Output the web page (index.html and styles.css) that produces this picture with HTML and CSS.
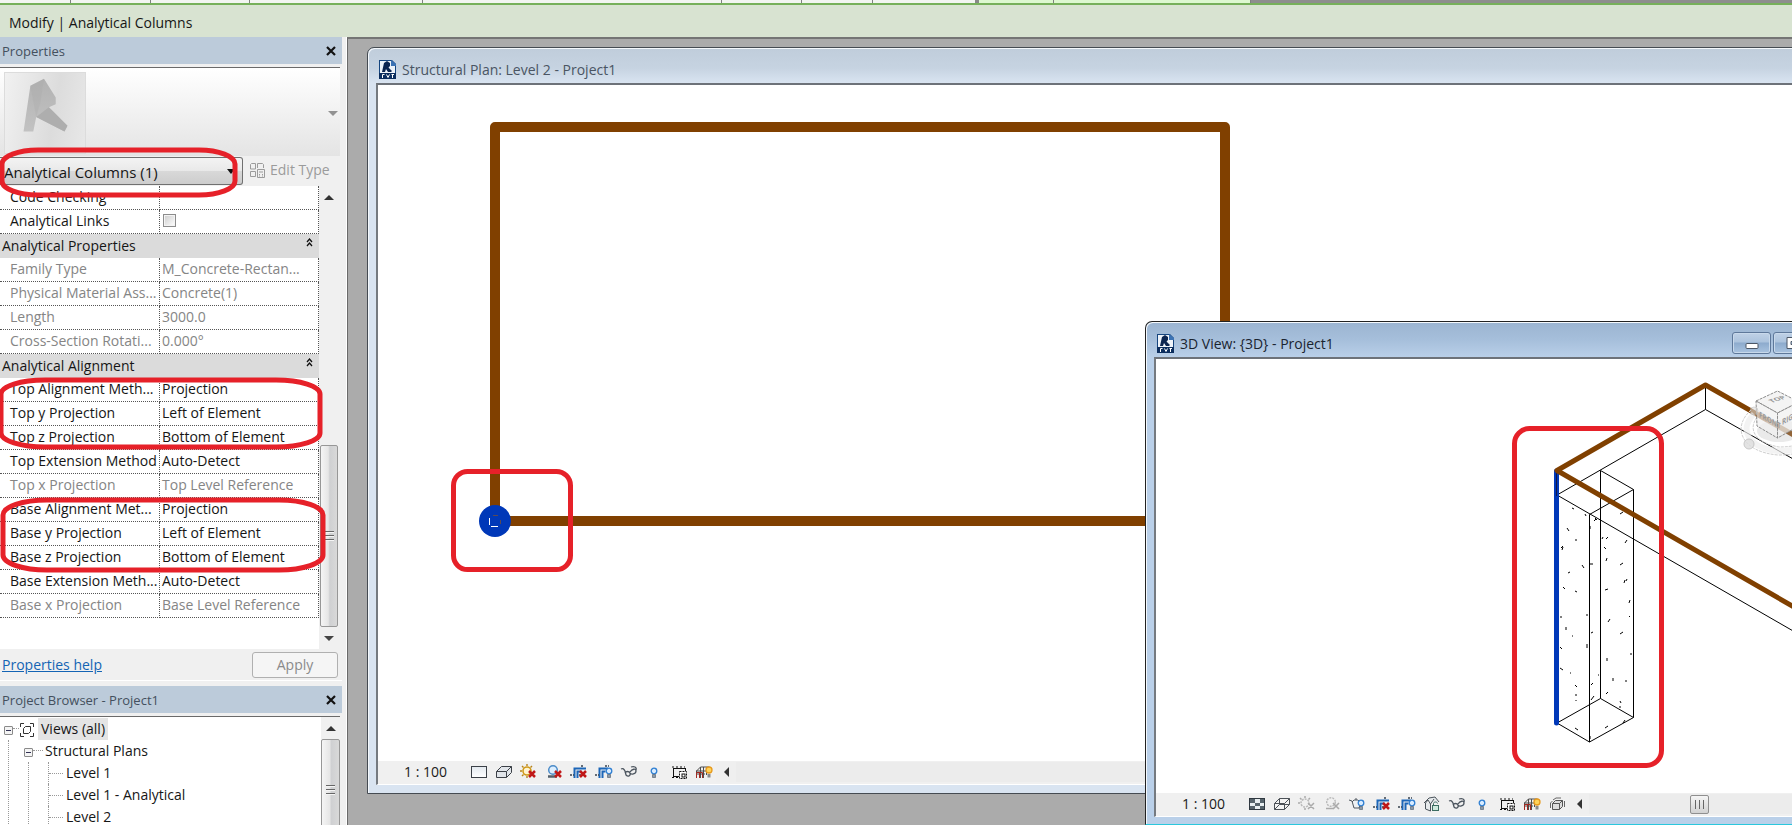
FILE: index.html
```html
<!DOCTYPE html>
<html lang="en">
<head>
<meta charset="utf-8">
<title>Project1 - Analytical Columns</title>
<link rel="stylesheet" href="styles.css">
</head>
<body>
<svg class="sprite" aria-hidden="true">
  <defs>
    <linearGradient id="gLogo" x1="0" y1="0" x2="0" y2="1"><stop offset="0" stop-color="#b2b2b2"/><stop offset="1" stop-color="#c2c2c2"/></linearGradient>
    <linearGradient id="gSheet" x1="0" y1="0" x2="0" y2="1"><stop offset="0" stop-color="#e2e8ee"/><stop offset="1" stop-color="#fff"/></linearGradient>
    <symbol id="rvt" viewBox="0 0 17 19">
      <path d="M0 0h13l4 4v15H0z" fill="#15457f"/>
      <path d="M1 1h11v4h4v8H1z" fill="#eef3f9"/>
      <path d="M12 0l5 4v2h-5z" fill="#3c73b4"/>
      <path d="M5 3l3-2 3 2v3L9.500 7.500 13 11l-1 1H9L7 9l-1 3H3z" fill="#0b2550"/>
      <path d="M0 13h17v6H0z" fill="#0b2d5e"/>
      <path d="M3.500 18v-3.500h2M7.500 14.500l1.500 3 1.500-3M13.500 18v-3.500M12.500 14.500h2.500" stroke="#fff" fill="none"/>
    </symbol>
    <symbol id="sheet" viewBox="0 0 18 16"><rect x="1.500" y="2.500" width="15" height="11" fill="url(#gSheet)" stroke="#3b4047"/></symbol>
    <symbol id="checker" viewBox="0 0 18 16"><rect x="1.500" y="2.500" width="15" height="11" fill="#e8eef0" stroke="#2f3840"/><path d="M2 3h5v4H2zM12 3h4v4h-4zM7 7h5v3H7zM2 10h5v3H2zM12 10h4v3h-4z" fill="#56636b"/></symbol>
    <symbol id="box" viewBox="0 0 18 16"><path d="M1.500 7.500l5-5h10v6l-5 5h-10zM1.500 7.500h10v6M11.500 7.500l5-5" fill="#e1e5ea" stroke="#3b4047"/></symbol>
    <symbol id="wire" viewBox="0 0 18 16"><path d="M1.500 7.500l5-5h10v6l-5 5h-10zM1.500 7.500h10v6M11.500 7.500l5-5M6.500 2.500v6l-5 5M6.500 8.500h10" fill="#f4f4f4" stroke="#4c5157"/></symbol>
    <symbol id="cross" viewBox="0 0 8 8"><path d="M1 1l6 6M7 1L1 7" stroke="#c01818" stroke-width="2.500"/></symbol>
    <symbol id="bulb" viewBox="0 0 8 12"><circle cx="4" cy="4" r="2.800" fill="#d9ecff" stroke="#2f7fd2" stroke-width="1.300"/><path d="M2.500 7.500h3v3h-3z" fill="#8b98a6" stroke="#4a5968" stroke-width=".6"/></symbol>
    <symbol id="sun" viewBox="0 0 18 16"><circle cx="7" cy="7" r="4" fill="#fff4cf" stroke="#d19a1a" stroke-width="1.600"/><path d="M7 0v2M7 12v2M0 7h2M2 2l1.500 1.500M12 2l-1.500 1.500M2 12l1.500-1.500" stroke="#b8841a" stroke-width="1.400"/><use href="#cross" x="8" y="6" width="8" height="8"/></symbol>
    <symbol id="shadow" viewBox="0 0 18 16"><circle cx="8" cy="6" r="4.300" fill="#dceeff" stroke="#4b8bc8" stroke-width="1.500"/><path d="M3 12.500h9" stroke="#53606c" stroke-width="2.500"/><use href="#cross" x="9" y="6" width="8" height="8"/></symbol>
    <symbol id="sunOff" viewBox="0 0 18 16"><circle cx="7" cy="7" r="4" fill="none" stroke="#b9b9b9" stroke-width="1.500" stroke-dasharray="2 1"/><path d="M7 0v2M7 12v2M0 7h2M2 2l1.500 1.500M12 2l-1.500 1.500M10 7l6 6M16 7l-6 6" stroke="#aaa" stroke-width="1.500"/></symbol>
    <symbol id="shadowOff" viewBox="0 0 18 16"><circle cx="8" cy="6" r="4.300" fill="none" stroke="#b9b9b9" stroke-width="1.400" stroke-dasharray="2 1"/><path d="M3 12.500h7M10 7l6 6M16 7l-6 6" stroke="#aaa" stroke-width="1.600"/></symbol>
    <symbol id="teapot" viewBox="0 0 18 16"><path d="M1 4l3 1 2 7h5l2-5-3-3H6L4 6M8 2v2" fill="#eef1f3" stroke="#4e565e"/><use href="#bulb" x="9" y="3" width="8" height="12"/></symbol>
    <symbol id="crop" viewBox="0 0 18 16"><path d="M4.500 14V4.500H16M7.500 14V7.500h4" fill="none" stroke="#1c66b8" stroke-width="2"/><path d="M0 11h4M9 11h4M12 1v3" stroke="#37424d" stroke-dasharray="2 1" stroke-width="1.500"/><use href="#cross" x="9" y="6" width="8" height="8"/></symbol>
    <symbol id="cropShow" viewBox="0 0 18 16"><path d="M4.500 14V4.500H13M7.500 14V7.500h3" fill="none" stroke="#1c66b8" stroke-width="2"/><path d="M0 11h4M10 2h4" stroke="#37424d" stroke-dasharray="2 1" stroke-width="1.500"/><use href="#bulb" x="10" y="3" width="8" height="12"/></symbol>
    <symbol id="home" viewBox="0 0 18 16"><path d="M1 7l5-5 6-1 4 5M2.500 7v6l5 2V8L5 4zM7.500 8L11 3" fill="#e6eaec" stroke="#4b545b"/><path d="M10.500 9V7.500c0-2 4-2 4 0" fill="none" stroke="#3c6d62"/><rect x="9.500" y="9.500" width="6" height="5" fill="#cfe9dd" stroke="#3c6d62"/></symbol>
    <symbol id="glasses" viewBox="0 0 18 16"><path d="M1 5c2-1 3 0 4 2l1 4c2 2 5 1 4-2-1-2-4-2-5 0M10 9c1 2 6 1 6-2s-4-2-6 1M16 6c1-3-2-4-5-3" fill="none" stroke="#4c555f" stroke-width="1.300"/></symbol>
    <symbol id="bulbOnly" viewBox="0 0 18 16"><use href="#bulb" x="5" y="3" width="8" height="12"/></symbol>
    <symbol id="constraint" viewBox="0 0 18 16"><path d="M3.500 4v8M3 4.500h12M3 12.500h6M15.500 4v3" fill="none" stroke="#111"/><path d="M2 3h13M2 13.500h7" stroke="#111" stroke-dasharray="2 2"/><rect x="9.500" y="7.500" width="7" height="7" fill="#fff" stroke="#111" stroke-dasharray="2 1"/><rect x="12" y="10" width="3" height="3" fill="none" stroke="#111"/></symbol>
    <symbol id="analytic" viewBox="0 0 18 16"><path d="M1.500 14V7l4-4h9v6M1 7h10M5.500 3v11M8.500 3v11M11.500 3v8M2 10h8" fill="none" stroke="#4d4d4d"/><path d="M1.500 14V8.500h6V14M4.500 9v5" fill="none" stroke="#a32a22"/><circle cx="14" cy="6" r="3" fill="#ffd35a" stroke="#e79a1c" stroke-width="1.300"/><path d="M12.500 10h3v3.500h-3z" fill="#8a8a8a"/></symbol>
    <symbol id="displace" viewBox="0 0 18 16"><path d="M4.500 7.500h7v6h-7zM4.500 7.500l3-3h7v6l-3 3M11.500 7.500l3-3" fill="#dcdcdc" stroke="#555"/><path d="M5 4l3-2h5M2.500 12V7l2-2M16.500 5v6" fill="none" stroke="#666"/></symbol>
  </defs>
</svg>

<div class="app">
  <div class="ribbon" aria-hidden="true">
    <i class="w70"></i><i class="w80"></i><i class="w100"></i><i class="w172"></i><i class="w300"></i><i class="w80"></i><i class="w70"></i><i class="w107"></i><i class="w75 ctx"></i><i class="w197 ctx"></i>
  </div>
  <header class="options">Modify | Analytical Columns</header>

  <div class="main">
    <aside class="side">
      <section class="panel properties">
        <div class="panel-head"><h2>Properties</h2><button class="close" aria-label="Close Properties"><svg width="10" height="10" viewBox="0 0 10 10"><path d="M1 1l8 8M9 1L1 9" stroke="#111" stroke-width="2.200"/></svg></button></div>
        <div class="type-preview">
          <svg class="preview" width="82" height="82" viewBox="0 0 82 82" role="img" aria-label="Family preview"><path d="M26 13L40 6l12 19v7l-7 3 19 19-3 6-29-15-3 15H19z" fill="url(#gLogo)"/><path d="M32 45l13-10 19 19-3 6z" fill="#aeaeae"/><path d="M26 13L40 6l-4 25-4 14z" fill="#aaa" opacity=".3"/></svg>
          <button class="drop" aria-label="Change type"></button>
        </div>
        <div class="filter">
          <div class="select"><select aria-label="Element filter"><option>Analytical Columns (1)</option></select></div>
          <button class="edit" disabled><svg width="17" height="17" viewBox="0 0 17 17" fill="none" stroke="#9b9b9b"><path d="M1.500 7V2.500l1-1h4V7zM8.500 6V1.500h5l1 1V6M1.500 9.500h5v5h-5z"/><path d="M8.500 7.500h7v8h-7zM10 10h4M10 12.500h1M13 12.500h1M10 14h1M13 14h1"/></svg>Edit Type</button>
        </div>
        <div class="grid">
          <table>
            <colgroup><col class="name"><col></colgroup>
            <tbody>
              <tr><td>Code Checking</td><td></td></tr>
              <tr><td><label for="links">Analytical Links</label></td><td><input type="checkbox" id="links"></td></tr>
              <tr class="group"><th colspan="2"><button>Analytical Properties<svg width="7" height="9" viewBox="0 0 7 9"><path d="M1 4l2.500-3L6 4M1 8l2.500-3L6 8" fill="none" stroke="#111" stroke-width="1.300"/></svg></button></th></tr>
              <tr class="off"><td>Family Type</td><td>M_Concrete-Rectan...</td></tr>
              <tr class="off"><td>Physical Material Ass...</td><td>Concrete(1)</td></tr>
              <tr class="off"><td>Length</td><td>3000.0</td></tr>
              <tr class="off"><td>Cross-Section Rotati...</td><td>0.000°</td></tr>
              <tr class="group"><th colspan="2"><button>Analytical Alignment<svg width="7" height="9" viewBox="0 0 7 9"><path d="M1 4l2.500-3L6 4M1 8l2.500-3L6 8" fill="none" stroke="#111" stroke-width="1.300"/></svg></button></th></tr>
              <tr><td>Top Alignment Meth...</td><td>Projection</td></tr>
              <tr><td>Top y Projection</td><td>Left of Element</td></tr>
              <tr><td>Top z Projection</td><td>Bottom of Element</td></tr>
              <tr><td>Top Extension Method</td><td>Auto-Detect</td></tr>
              <tr class="off"><td>Top x Projection</td><td>Top Level Reference</td></tr>
              <tr><td>Base Alignment Met...</td><td>Projection</td></tr>
              <tr><td>Base y Projection</td><td>Left of Element</td></tr>
              <tr><td>Base z Projection</td><td>Bottom of Element</td></tr>
              <tr><td>Base Extension Meth...</td><td>Auto-Detect</td></tr>
              <tr class="off"><td>Base x Projection</td><td>Base Level Reference</td></tr>
            </tbody>
          </table>
          <div class="vscroll"><button class="up" aria-label="Scroll up"></button><div class="track low"><div class="thumb"></div></div><button class="down" aria-label="Scroll down"></button></div>
        </div>
        <div class="foot"><a href="#help">Properties help</a><button class="apply" disabled>Apply</button></div>
        <svg class="marks" aria-hidden="true">
          <rect x="2" y="113" width="233" height="45" rx="36" ry="14"/>
          <rect x="1" y="343" width="319" height="67" rx="44" ry="14"/>
          <rect x="3" y="463" width="320" height="70" rx="44" ry="15"/>
        </svg>
      </section>
      <section class="panel browser">
        <div class="panel-head"><h2>Project Browser - Project1</h2><button class="close" aria-label="Close Project Browser"><svg width="10" height="10" viewBox="0 0 10 10"><path d="M1 1l8 8M9 1L1 9" stroke="#111" stroke-width="2.200"/></svg></button></div>
        <div class="tree-wrap">
          <ul class="tree">
            <li class="root"><button class="tog" aria-label="Collapse Views"></button><i class="dash short"></i><svg width="14" height="14" viewBox="0 0 14 14" fill="none" stroke="#333"><path d="M.5 4V.5H4M10 .5h3.500V4M.5 10v3.500H4M10 13.500h3.500V10"/><path d="M3.500 5.500l2-2h5v5l-2 2h-5z"/></svg><span class="sel">Views (all)</span>
              <ul>
                <li class="branch"><button class="tog" aria-label="Collapse Structural Plans"></button><i class="dash"></i><span>Structural Plans</span>
                  <ul>
                    <li class="leaf"><span>Level 1</span></li>
                    <li class="leaf"><span>Level 1 - Analytical</span></li>
                    <li class="leaf"><span>Level 2</span></li>
                  </ul>
                </li>
              </ul>
            </li>
          </ul>
          <div class="vscroll"><button class="up" aria-label="Scroll up"></button><div class="track"><div class="thumb"></div></div></div>
        </div>
      </section>
    </aside>

    <main class="desk">
      <section class="win plan">
        <div class="title"><svg width="17" height="19"><use href="#rvt"/></svg><h1>Structural Plan: Level 2 - Project1</h1></div>
        <div class="client">
          <svg class="view" role="img" aria-label="Structural plan of Level 2">
            <g transform="translate(-378 -85)">
              <path d="M1225 521V127H495v394h730z" fill="none" stroke="#804000" stroke-width="10" stroke-linejoin="round"/>
              <circle cx="495" cy="521" r="16" fill="#0038b8"/>
              <path d="M489.500 518v7M491 526.500h7" stroke="#fff" stroke-width="1"/>
              <path d="M493 515.500h5M500.500 520v4" stroke="#5b4a52"/>
              <rect x="453.500" y="471.500" width="117" height="98" rx="14" fill="none" stroke="#e62129" stroke-width="5"/>
            </g>
          </svg>
          <div class="viewbar">
            <button class="scale">1 : 100</button>
            <button aria-label="Detail level"><svg><use href="#sheet"/></svg></button>
            <button aria-label="Visual style"><svg><use href="#box"/></svg></button>
            <button aria-label="Sun path off"><svg><use href="#sun"/></svg></button>
            <button aria-label="Shadows off"><svg><use href="#shadow"/></svg></button>
            <button aria-label="Do not crop view"><svg><use href="#crop"/></svg></button>
            <button aria-label="Show crop region"><svg><use href="#cropShow"/></svg></button>
            <button aria-label="Temporary hide or isolate"><svg><use href="#glasses"/></svg></button>
            <button aria-label="Reveal hidden elements"><svg><use href="#bulbOnly"/></svg></button>
            <button aria-label="Reveal constraints"><svg><use href="#constraint"/></svg></button>
            <button aria-label="Analytical model"><svg><use href="#analytic"/></svg></button>
            <div class="hscroll"><button class="left" aria-label="Scroll left"></button></div>
          </div>
        </div>
      </section>

      <section class="win three">
        <div class="title"><svg width="17" height="19"><use href="#rvt"/></svg><h1>3D View: {3D} - Project1</h1>
          <div class="ctl">
            <button aria-label="Minimize"><svg width="14" height="14" viewBox="0 0 14 14"><rect x="1" y="7.500" width="12" height="5" rx="1" fill="#fff" stroke="#4c5766"/></svg></button>
            <button aria-label="Maximize"><svg width="14" height="14" viewBox="0 0 14 14"><path d="M1 1.500h12v11H1zM5 5.500v3h4v-3z" fill="#fff" stroke="#4c5766" fill-rule="evenodd"/></svg></button>
            <button aria-label="Close"></button>
          </div>
        </div>
        <div class="client">
          <svg class="view" role="img" aria-label="3D view of the analytical column">
            <g transform="translate(-1156 -359)" fill="none">
              <g stroke="#000" stroke-width="1">
                <path d="M1705.500 386v23.500M1557 495l148.500-85.500L1880 508M1557 495l323 186"/>
                <path d="M1600.500 470.500l33 19M1633.500 489.500l-44 25M1600.500 470.500v228M1633.500 489.500v228M1589.500 514.500v227.500"/>
                <path d="M1557 723l43.500-24.500 33 19-44 24.500z"/>
                <path d="M1572 508l2 1M1585 514l1 2M1595 518l2 2M1594 521l2-2M1620 514l3-2M1567 528l2 3M1590 526v3M1575 540h2M1602 539l1-2M1606 539l2-2M1625 543l2-3M1561 548l2-2M1604 547l2 2M1562 550l1-3M1568 573l2-1M1582 565l2 3M1590 564h3M1606 561l1-3M1620 565l3-2M1563 587l2 2M1575 591l2 1M1605 590l3-1M1624 583l1-3M1626 581l1-2M1629 603l1-3M1560 617h2M1587 614v2M1608 622l2-3M1629 616l1 1M1566 627v3M1572 636h1M1591 633l2-1M1620 634l3-2M1560 647l2 2M1587 644v4M1607 658v3M1631 653v2M1560 668l3 2M1570 673h1M1598 675h1M1613 681v-3M1626 680v2M1575 685l2 2M1591 685l2-2M1576 694v2M1576 700v1M1591 700l3-4M1606 694l2-2M1620 701l1 2M1620 706v2M1575 728l3 2M1605 728l3-2M1623 723l2-3M1590 736v3"/>
              </g>
              <path d="M1556.500 471v252" stroke="#0038b8" stroke-width="5" stroke-linecap="round"/>
              <path d="M1556.500 472v24" stroke="#101848"/>
              <path d="M1880 484l-174.500-99L1557 470.500l323 186" stroke="#804000" stroke-width="5" stroke-linejoin="round"/>
              <path d="M1751 410c-20 18-9 42 27 45 18 0 30-4 40-10M1757 417c-10 14 0 26 22 30 14 0 25-3 34-9" stroke="#cfcfcf" stroke-dasharray="3 1"/>
              <path d="M1754 414c-16 16-5 34 24 37 16 0 28-4 37-10" stroke="#eee" stroke-width="6" opacity=".7"/>
              <ellipse cx="1779" cy="431" rx="22" ry="11" fill="#bbb" opacity=".3"/>
              <g stroke="#8c8c8c" stroke-dasharray="3 1" fill="#f0f0f0" fill-opacity=".7"><path d="M1756 401l21.500-10 21.500 11-21.500 11z"/><path d="M1756 401l21.500 12v25l-20.500-12z"/><path d="M1777.500 413l21.500-11v24l-21.500 12z"/></g>
              <circle cx="1749" cy="444" r="5" fill="#ddd" stroke="#bbb" opacity=".8"/>
              <circle cx="1754" cy="411" r="4" fill="#ddd" stroke="#bbb" opacity=".6"/>
              <g class="cube"><text transform="matrix(.9 -.3 .7 .5 1772 403)">TOP</text><text transform="matrix(.8 .45 0 1 1759 417)">FRONT</text><text transform="matrix(.8 -.45 0 1 1782 425)">RIGHT</text></g>
              <rect x="1514.500" y="428.500" width="147" height="337" rx="15" stroke="#e62129" stroke-width="5"/>
            </g>
          </svg>
          <div class="viewbar">
            <button class="scale">1 : 100</button>
            <button aria-label="Detail level"><svg><use href="#checker"/></svg></button>
            <button aria-label="Visual style"><svg><use href="#wire"/></svg></button>
            <button aria-label="Sun path" disabled><svg><use href="#sunOff"/></svg></button>
            <button aria-label="Shadows" disabled><svg><use href="#shadowOff"/></svg></button>
            <button aria-label="Rendering dialog"><svg><use href="#teapot"/></svg></button>
            <button aria-label="Do not crop view"><svg><use href="#crop"/></svg></button>
            <button aria-label="Show crop region"><svg><use href="#cropShow"/></svg></button>
            <button aria-label="Lock 3D view"><svg><use href="#home"/></svg></button>
            <button aria-label="Temporary hide or isolate"><svg><use href="#glasses"/></svg></button>
            <button aria-label="Reveal hidden elements"><svg><use href="#bulbOnly"/></svg></button>
            <button aria-label="Reveal constraints"><svg><use href="#constraint"/></svg></button>
            <button aria-label="Analytical model"><svg><use href="#analytic"/></svg></button>
            <button aria-label="Displacement sets"><svg><use href="#displace"/></svg></button>
            <div class="hscroll"><button class="left" aria-label="Scroll left"></button><div class="hthumb"></div></div>
          </div>
        </div>
      </section>
    </main>
  </div>
</div>
</body>
</html>
```

FILE: styles.css
```css
* { box-sizing: border-box; }
body {
  margin: 0;
  font: 14px/20px "Open Sans", "Noto Sans", sans-serif;
  color: #161616;
  background: #f0f0f0;
}
button, select, input { font: inherit; color: inherit; margin: 0; padding: 0; }
button { border: 0; background: none; }
h1, h2 { margin: 0; font: inherit; white-space: nowrap; }
ul { list-style: none; margin: 0; padding: 0; }
.sprite { position: absolute; width: 0; height: 0; }

.app { display: flex; flex-direction: column; height: 100vh; overflow: hidden; }

/* ribbon edge */
.ribbon { display: flex; flex: none; height: 5px; background: #8e8e8e; border-bottom: 2px solid #76b05a; }
.ribbon i { background: #f2f5f1; border-right: 1px solid #808080; }
.ribbon .w70 { width: 71px; }
.ribbon .w75 { width: 75px; }
.ribbon .w80 { width: 80px; }
.ribbon .w100 { width: 99px; }
.ribbon .w107 { width: 106px; border-right: 4px solid #888; }
.ribbon .w172 { width: 173px; }
.ribbon .w197 { width: 197px; }
.ribbon .w300 { width: 299px; }
.ribbon .ctx { background: #ddf8d0; }

.options { flex: none; height: 32px; padding: 8px 9px 0; background: #d8e3d1; white-space: nowrap; }
.main { display: flex; flex: 1; min-height: 0; }

/* left side */
.side { display: flex; flex-direction: column; flex: none; width: 347px; padding-right: 4px; background: #f0f0f0; border-right: 1px solid #fff; }
.panel { display: flex; flex-direction: column; position: relative; }
.panel-head { display: flex; flex: none; align-items: center; justify-content: space-between; height: 27px; padding: 0 6px 0 2px; margin-bottom: 3px; background: #bccbda; color: #44505e; font-size: 13px; }
.close { display: flex; padding: 0; }

.type-preview { display: flex; justify-content: space-between; height: 89px; padding: 4px 2px 2px 4px; margin-right: 2px; border-top: 1px solid #6a6a6a; background: linear-gradient(#fff, #e4e4e4); }
.preview { border: 1px solid #dcdcdc; background: linear-gradient(100deg, #f1f1f1, #dcdcdc 60%, #e8e8e8); }
.drop { width: 10px; }
.drop::before { content: ""; display: block; border: 5px solid transparent; border-top-color: #929292; border-bottom: 0; }

.filter { display: flex; height: 30px; padding-top: 1px; gap: 6px; }
.select { position: relative; flex: none; width: 243px; height: 28px; }
.select select { width: 100%; height: 28px; padding: 1px 4px 0; appearance: none; border: 1px solid #707070; border-left: 0; border-radius: 0 3px 3px 0; background: linear-gradient(#f3f3f3, #e9e9e9 48%, #d8d8d8 52%, #cdcdcd); font-size: 15px; }
.select::after { content: ""; position: absolute; right: 8px; top: 12px; border: 4px solid transparent; border-top: 5px solid #111; border-bottom: 0; pointer-events: none; }
.edit { display: flex; align-items: center; gap: 4px; height: 26px; color: #9b9b9b; white-space: nowrap; }

.grid { display: flex; height: 463px; background: #fff; }
.grid table { flex: 1; height: max-content; table-layout: fixed; border-collapse: separate; border-spacing: 0; min-width: 0; }
.grid .name { width: 160px; }
.grid td, .grid th { height: 24px; padding: 0; font-weight: normal; text-align: left; white-space: nowrap; overflow: hidden; }
.grid td { border-right: 1px dotted #555; border-bottom: 1px dotted #555; padding: 0 0 2px 2px; }
.grid td:first-child { padding-left: 10px; }
.grid .off { color: #858585; }
.group button { display: flex; justify-content: space-between; width: 100%; height: 24px; padding: 2px 6px 0 2px; background: #dbdbdb; }
.group svg { margin-top: 2px; }
.grid input { display: block; width: 13px; height: 13px; margin-left: 1px; appearance: none; border: 1px solid #8c8c8c; background: linear-gradient(135deg, #ccc, #fff); box-shadow: inset 0 0 0 1px #f4f4f4; }

.vscroll { display: flex; flex-direction: column; flex: none; width: 23px; padding: 0 4px 0 1px; background: #f0f0f0; }
.vscroll button { flex: none; height: 22px; display: grid; place-items: center; }
.vscroll .up::before { content: ""; border: 5px solid transparent; border-bottom-color: #333; border-top: 0; }
.vscroll .down::before { content: ""; border: 5px solid transparent; border-top-color: #444; border-bottom: 0; }
.track { display: flex; flex-direction: column; flex: 1; }
.track.low { padding-top: 237px; }
.thumb { display: grid; place-items: center; flex: 1; border: 1px solid #979797; border-radius: 2px; background: linear-gradient(90deg, #f5f5f5, #e6e6e6 45%, #cfd0d2 55%, #d9d9d9); }
.thumb::before { content: ""; width: 9px; height: 10px; background: repeating-linear-gradient(#666 0 1px, #f5f5f5 1px 2px, transparent 2px 4px); }

.foot { display: flex; justify-content: space-between; align-items: center; height: 32px; padding: 0 4px 0 2px; border-bottom: 1px solid #fff; }
.foot a { color: #1464b4; }
.apply { width: 86px; height: 26px; border: 1px solid #b0b0b0; border-radius: 3px; background: #f5f5f5; color: #8a8a8a; }

.marks { position: absolute; left: 0; top: 0; width: 100%; height: 100%; pointer-events: none; fill: none; stroke: #e62129; stroke-width: 5px; }

.browser { flex: 1; min-height: 0; margin-top: 5px; }
.tree-wrap { display: flex; flex: 1; min-height: 0; margin-right: 2px; overflow: hidden; border-top: 1px solid #6a6a6a; background: #fff; }
.tree { flex: 1; padding: 1px 0 0 4px; line-height: 22px; white-space: nowrap; }
.tog { display: inline-block; width: 9px; height: 9px; border: 1px solid #8a8a8a; border-radius: 1px; background: linear-gradient(#335, #335) center / 5px 1px no-repeat, #f4f4f4; }
.dash { display: inline-block; width: 10px; height: 1px; margin: 0 2px 5px 0; border-top: 1px dotted #999; }
.dash.short { width: 6px; margin-right: 1px; }
.root > svg { vertical-align: middle; }
.sel { display: inline-block; line-height: 22px; margin-left: 4px; padding: 0 3px; background: #e4e4e4; vertical-align: top; }
.root > ul { margin-left: 4px; padding-left: 15px; border-left: 1px dotted #999; }
.branch > ul { margin-left: 4px; padding-left: 19px; border-left: 1px dotted #999; }
.leaf { display: flex; align-items: center; gap: 3px; border-left: 1px dotted #999; }
.leaf::before { content: ""; width: 14px; border-top: 1px dotted #999; }
.browser .vscroll { width: 19px; padding: 0; }
.browser .thumb { flex: none; height: 102px; }

/* drawing area */
.desk { position: relative; flex: 1; overflow: hidden; background: #ababab; border-left: 1px solid #6a6a6a; border-top: 2px solid #757575; }
.win { position: absolute; display: flex; flex-direction: column; padding: 0 9px 8px 8px; border: 1px solid #454b52; border-radius: 7px 7px 0 0; box-shadow: inset 1px 1px #f4f8fc; }
.plan { left: 19px; top: 8px; right: -30px; bottom: 31px; background: linear-gradient(#c0cddb, #c6d3e1 20px, #d9e4f1 35px); color: #4a5563; }
.three { left: 797px; top: 282px; right: -71px; bottom: 0; padding-bottom: 7px; background: linear-gradient(#9bb4d1, #a6bfdb 18px, #bad0e9 36px); border-color: #222; border-bottom-color: #2bc7dc; color: #1a2430; }
.title { display: flex; flex: none; align-items: center; gap: 6px; height: 35px; padding: 8px 0 0 3px; }
.title h1 { flex: 1; }
.ctl { display: flex; gap: 2px; align-self: flex-start; }
.ctl button { display: grid; place-items: center; width: 39px; height: 22px; margin-top: 2px; border: 1px solid #5e789a; border-radius: 3px; background: linear-gradient(#bfd1e6, #acc3dd 45%, #8dabcd 50%, #a9c3e0); box-shadow: inset 0 0 0 1px #c8d9eb; }
.client { display: flex; flex-direction: column; flex: 1; min-height: 0; border: 1px solid #fff; border-top: 2px solid #6d7279; border-left: 2px solid #757a80; background: #fff; }
.view { display: block; flex: 1; width: 100%; min-height: 0; }
.cube { font-size: 8px; fill: #999; font-weight: bold; }
.viewbar { display: flex; flex: none; align-items: center; height: 23px; padding-bottom: 1px; background: #f0f0f0; }
.viewbar > button { display: grid; place-items: center; width: 25px; height: 22px; flex: none; }
.viewbar .scale { width: 88px; padding-left: 7px; color: #1a1a1a; }
.viewbar button svg { width: 18px; height: 16px; }
.hscroll { display: flex; flex: 1; align-items: center; height: 20px; background: #ececec; }
.hscroll .left { display: grid; place-items: center; width: 20px; height: 20px; background: #efefef; }
.hscroll .left::before { content: ""; border: 5px solid transparent; border-right-color: #333; border-left: 0; }
.hthumb { width: 19px; height: 19px; margin-left: 101px; border: 1px solid #8f8f8f; border-radius: 2px; background: repeating-linear-gradient(90deg, #666 0 1px, transparent 1px 4px) center / 9px 9px no-repeat, linear-gradient(#f5f5f5, #d2d2d2); }
```
